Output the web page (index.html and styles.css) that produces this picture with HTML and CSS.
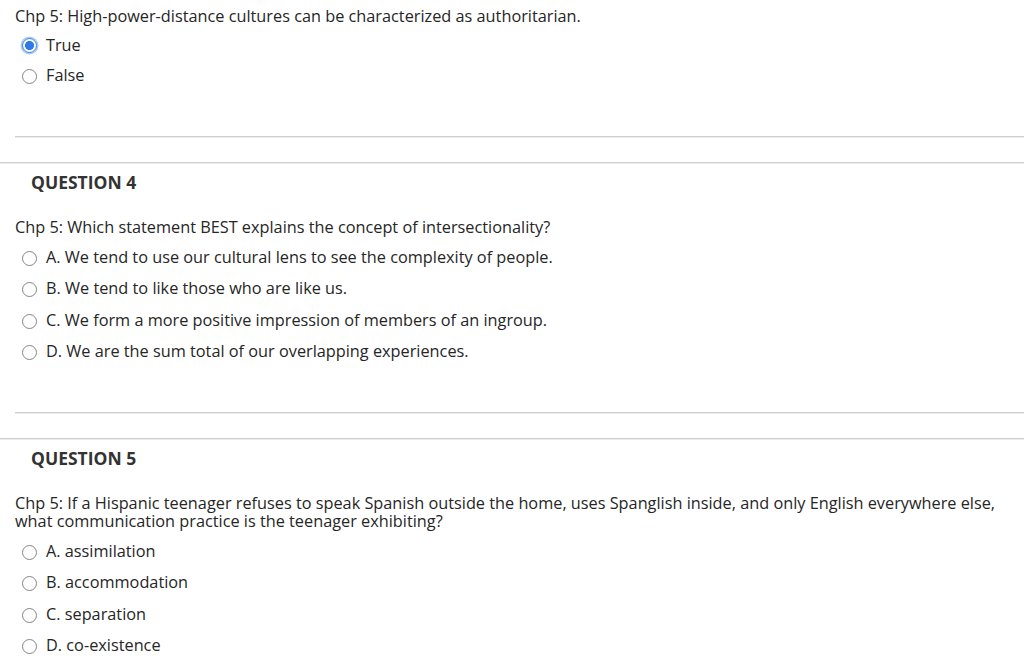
FILE: index.html
```html
<!DOCTYPE html>
<html>
<head>
<meta charset="utf-8">
<link rel="stylesheet" href="styles.css">
</head>
<body>
<div class="page">
  <div class="question first">
    <div class="qtext">Chp 5: High-power-distance cultures can be characterized as authoritarian.</div>
    <div class="options tf">
      <div class="opt"><span class="radio checked"></span><span class="label">True</span></div>
      <div class="opt"><span class="radio"></span><span class="label">False</span></div>
    </div>
  </div>
  <div class="inner-sep"></div>
  <div class="full-sep"></div>

  <div class="question">
    <div class="qhead">QUESTION 4</div>
    <div class="qtext">Chp 5: Which statement BEST explains the concept of intersectionality?</div>
    <div class="options">
      <div class="opt"><span class="radio"></span><span class="label">A. We tend to use our cultural lens to see the complexity of people.</span></div>
      <div class="opt"><span class="radio"></span><span class="label">B. We tend to like those who are like us.</span></div>
      <div class="opt"><span class="radio"></span><span class="label">C. We form a more positive impression of members of an ingroup.</span></div>
      <div class="opt"><span class="radio"></span><span class="label">D. We are the sum total of our overlapping experiences.</span></div>
    </div>
  </div>
  <div class="inner-sep"></div>
  <div class="full-sep"></div>

  <div class="question">
    <div class="qhead">QUESTION 5</div>
    <div class="qtext">Chp 5: If a Hispanic teenager refuses to speak Spanish outside the home, uses Spanglish inside, and only English everywhere else, what communication practice is the teenager exhibiting?</div>
    <div class="options">
      <div class="opt"><span class="radio"></span><span class="label">A. assimilation</span></div>
      <div class="opt"><span class="radio"></span><span class="label">B. accommodation</span></div>
      <div class="opt"><span class="radio"></span><span class="label">C. separation</span></div>
      <div class="opt"><span class="radio"></span><span class="label">D. co-existence</span></div>
    </div>
  </div>
</div>
</body>
</html>
```

FILE: styles.css
```css
html, body {
  margin: 0;
  padding: 0;
  background: #ffffff;
}
body {
  font-family: "Open Sans", "Liberation Sans", sans-serif;
  font-size: 16.3px;
  color: #262626;
  width: 1024px;
  overflow: hidden;
}
.page {
  padding-top: 7px;
}
.question {
  padding-left: 15px;
  padding-right: 20px;
}
.qhead {
  font-weight: bold;
  font-size: 17.5px;
  line-height: 20px;
  padding-left: 16px;
  padding-top: 8px;
  margin-bottom: 26px;
  color: #333333;
}
.qtext {
  line-height: 18px;
}
.options {
  display: flex;
  flex-direction: column;
  gap: 13.33px;
  margin-top: 12px;
}
.options.tf {
  gap: 12px;
  margin-top: 11px;
}
.opt {
  display: flex;
  align-items: center;
  line-height: 18px;
  padding-left: 7px;
}
.radio {
  box-sizing: border-box;
  width: 15px;
  height: 15px;
  border-radius: 50%;
  border: 1px solid #858585;
  background: #fff;
  margin-right: 9px;
  margin-top: 3px;
  flex: none;
}
.radio.checked {
  border: 1.5px solid #2f7ae5;
  background: radial-gradient(circle, #2f7ae5 0, #2f7ae5 4.2px, #ffffff 4.8px);
  box-shadow: 0 0 0 1.5px #a9cbf6;
  margin-top: 1px;
}
.inner-sep {
  margin-top: 52px;
  margin-left: 15px;
  border-top: 1px solid #cfcfcf;
  border-bottom: 1px solid #ececec;
}
.full-sep {
  margin-top: 24px;
  border-top: 1px solid #cfcfcf;
  border-bottom: 1px solid #ececec;
}
```
